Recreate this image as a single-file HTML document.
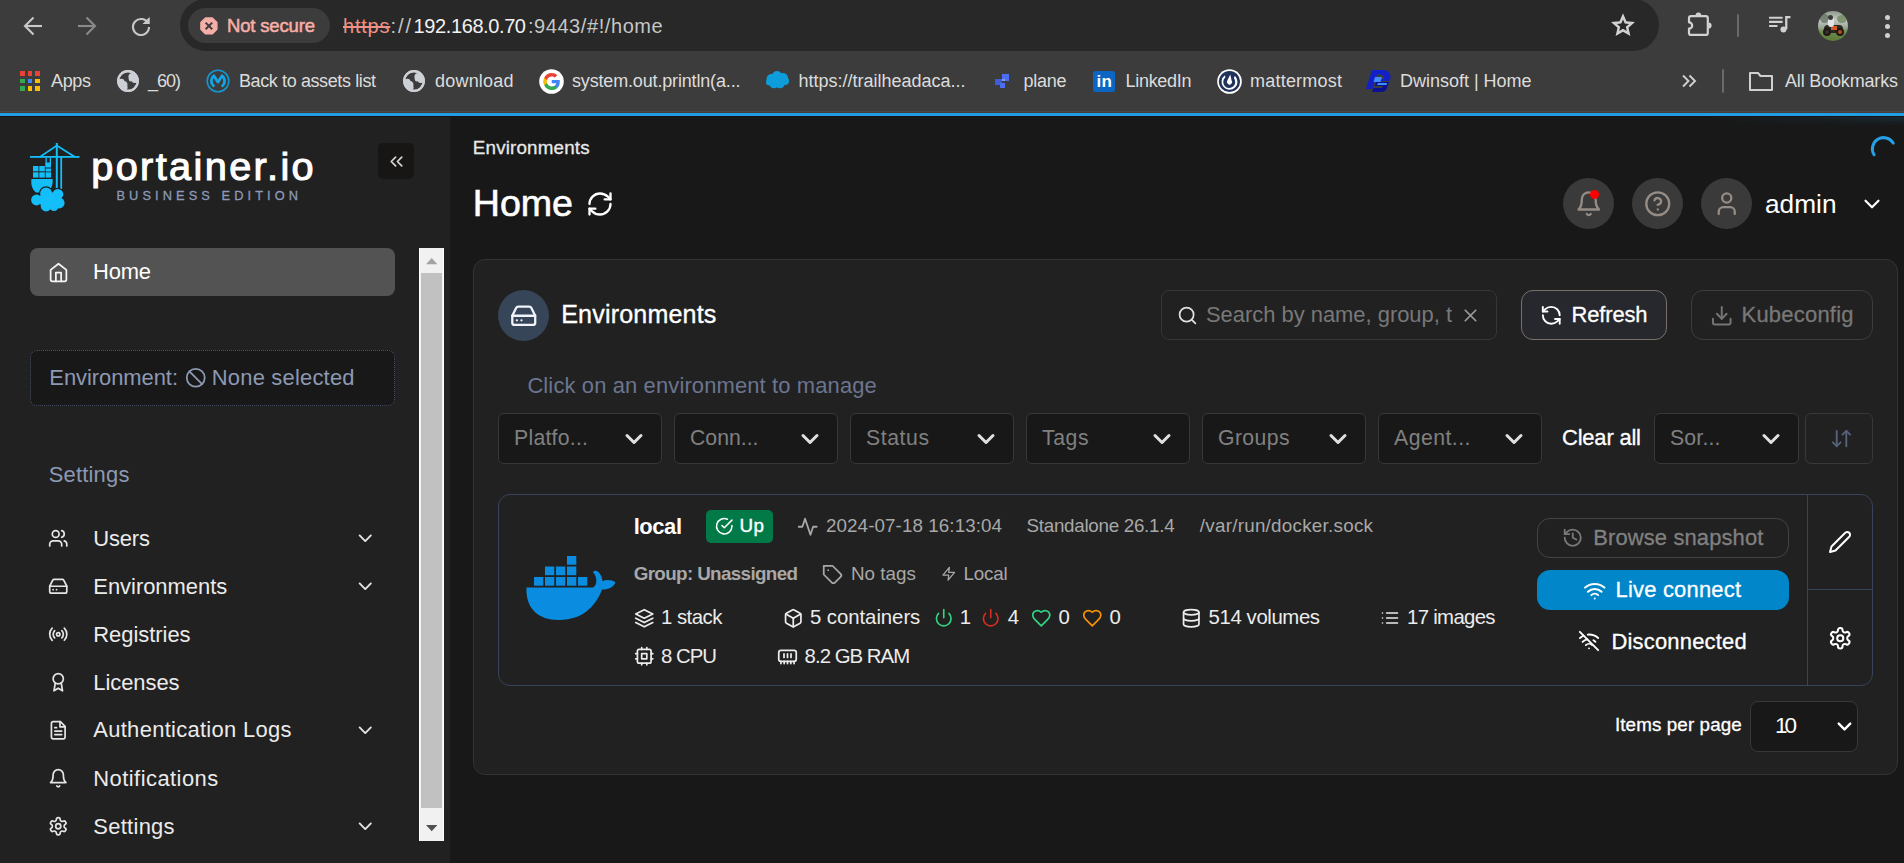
<!DOCTYPE html>
<html lang="en"><head><meta charset="utf-8"><title>Portainer | Home</title>
<style>
*{box-sizing:border-box;margin:0;padding:0}
html,body{width:1904px;height:863px;overflow:hidden;background:#181818}
body{position:relative;font-family:"Liberation Sans",sans-serif;color:#fff}
.t{position:absolute;white-space:nowrap;display:block}
.b{position:absolute}
.i{position:absolute;display:block;overflow:visible}
</style></head><body>
<div class="b" style="left:0px;top:0px;width:1904px;height:113px;background:#3c3c3c;"></div>
<div class="b" style="left:0px;top:111px;width:1904px;height:1px;background:#484848;"></div>
<div class="b" style="left:0px;top:112px;width:1904px;height:1px;background:#443d38;"></div>
<div class="b" style="left:0px;top:113px;width:1904px;height:3px;background:#229ee7;"></div>
<div class="b" style="left:0px;top:116px;width:1904px;height:1px;background:#1b1512;z-index:5;"></div>
<div class="b" style="left:180px;top:-1px;width:1479px;height:52px;background:#282828;border-radius:26px;"></div>
<div class="b" style="left:187.5px;top:8px;width:142px;height:35px;background:#3c3c3c;border-radius:17.5px;"></div>
<svg class="i" style="left:21px;top:14px" width="24" height="24" viewBox="0 0 24 24" fill="none" stroke="#c8c8c8" stroke-width="2.1" stroke-linecap="butt" stroke-linejoin="miter"><path d="M21 12H4.500"/><path d="M12.500 3.500 4 12l8.500 8.500"/></svg>
<svg class="i" style="left:75px;top:14px" width="24" height="24" viewBox="0 0 24 24" fill="none" stroke="#8a8a8a" stroke-width="2.1" stroke-linecap="butt" stroke-linejoin="miter"><path d="M3 12h16.500"/><path d="M11.500 3.500 20 12l-8.500 8.500"/></svg>
<svg class="i" style="left:129px;top:14px" width="24" height="24" viewBox="0 0 24 24" fill="none" stroke="#c8c8c8" stroke-width="2.1" stroke-linecap="butt" stroke-linejoin="miter"><path d="M19.200 9.500A8 8 0 1 0 20 13"/><path d="M20.500 3v7h-7" fill="#c8c8c8" stroke="none"/><path d="M20.500 3.500v6.500h-6.500z" fill="#c8c8c8" stroke="none"/></svg>
<svg class="i" style="left:199.700px;top:17.200px" width="17.800" height="17.800" viewBox="0 0 20 20"><path d="M6.200 1h7.600L19 6.200v7.600L13.800 19H6.200L1 13.800V6.200z" fill="#f6aea7" stroke="#f6aea7" stroke-width="1.500" stroke-linejoin="round"/><path d="M6.300 6.300l7.400 7.400M13.700 6.300l-7.400 7.400" stroke="#3c3c3c" stroke-width="2.200" fill="none"/></svg>
<span class="t" id="notsec" style="left:227px;top:16.75px;font-size:18.5px;line-height:18.5px;color:#f6aea7;letter-spacing:-0.163px;-webkit-text-stroke:0.55px #f6aea7;">Not secure</span>
<span class="t" id="url1" style="left:343px;top:16.3px;font-size:20px;line-height:20px;color:#ee9186;letter-spacing:0.785px;text-decoration:line-through;">https</span>
<span class="t" id="url2" style="left:390.4px;top:16.3px;font-size:20px;line-height:20px;color:#c4c7c5;letter-spacing:1.964px;">://</span>
<span class="t" id="url3" style="left:413.6px;top:16.3px;font-size:20px;line-height:20px;color:#f2f2f2;letter-spacing:-0.398px;">192.168.0.70</span>
<span class="t" id="url4" style="left:527.9px;top:16.3px;font-size:20px;line-height:20px;color:#c4c7c5;letter-spacing:0.577px;">:9443/#!/home</span>
<svg class="i" style="left:1605px;top:8px" width="36" height="36" viewBox="1605 8 36 36"><path d="M1623.00 13.30 L1626.41 21.21 L1634.98 22.01 L1628.51 27.69 L1630.41 36.09 L1623.00 31.70 L1615.59 36.09 L1617.49 27.69 L1611.02 22.01 L1619.59 21.21z M1623.00 19.50 L1624.73 23.52 L1629.09 23.92 L1625.80 26.81 L1626.76 31.08 L1623.00 28.84 L1619.24 31.08 L1620.20 26.81 L1616.91 23.92 L1621.27 23.52z" fill="#d2d2d2" fill-rule="evenodd"/></svg>
<svg class="i" style="left:1680px;top:5px" width="40" height="40" viewBox="1680 5 40 40"><path d="M1691 16.200H1705.800a2 2 0 0 1 2 2V32.900a2 2 0 0 1-2 2H1691a2 2 0 0 1-2-2V28.700a3.200 3.200 0 0 0 0-6.400V18.200a2 2 0 0 1 2-2z" fill="none" stroke="#d2d2d2" stroke-width="2.200" stroke-linejoin="round"/><path d="M1695.500 15.500a2.900 2.900 0 0 1 5.800 0z" fill="#d2d2d2"/><path d="M1708.500 22.400a3.100 3.100 0 0 1 0 6.200z" fill="#d2d2d2"/></svg>
<div class="b" style="left:1737px;top:14px;width:2px;height:23px;background:#6a6a6a;border-radius:1px;"></div>
<svg class="i" style="left:1767px;top:12px" width="25" height="25" viewBox="0 0 24 24" fill="none" stroke="#d0d0d0" stroke-width="2"><path d="M2 5.500h13M2 9.500h13M2 13.500h8"/><path d="M18.500 16.500V5h4" stroke-width="2.200"/><circle cx="15.800" cy="16.800" r="2.900" fill="#d0d0d0" stroke="none"/></svg>
<div class="b" style="left:1817.500px;top:11px;width:30px;height:30px;border-radius:50%;background:linear-gradient(180deg,#8e9a8c 0,#c4cbc6 30%,#9aa596 55%,#6e8a48 70%,#5c7a3a 100%);overflow:hidden"><div class="b" style="left:2px;top:3px;width:9px;height:9px;border-radius:50%;background:#5a6a55;opacity:.7"></div><div class="b" style="left:19px;top:4px;width:10px;height:8px;border-radius:50%;background:#6f8a5e;opacity:.8"></div><div class="b" style="left:6px;top:14px;width:19px;height:8px;border-radius:4px;background:#2b2724"></div><div class="b" style="left:5px;top:17px;width:8px;height:8px;border-radius:50%;background:#3a302a;border:2px solid #1c1a18"></div><div class="b" style="left:18px;top:17px;width:8px;height:8px;border-radius:50%;background:#b84a1e;border:2px solid #1c1a18"></div><div class="b" style="left:13px;top:15px;width:6px;height:4px;background:#d0581f"></div><div class="b" style="left:10px;top:6px;width:6px;height:10px;border-radius:3px;background:#e4e6e6"></div><div class="b" style="left:10.500px;top:4px;width:5px;height:5px;border-radius:50%;background:#3b3b3b"></div></div>
<div class="b" style="left:1884.5px;top:14.5px;width:5px;height:5px;background:#d0d0d0;border-radius:2.5px;"></div>
<div class="b" style="left:1884.5px;top:23.5px;width:5px;height:5px;background:#d0d0d0;border-radius:2.5px;"></div>
<div class="b" style="left:1884.5px;top:32.5px;width:5px;height:5px;background:#d0d0d0;border-radius:2.5px;"></div>
<div class="b" style="left:20px;top:71px;width:4.6px;height:4.6px;background:#ea4335;"></div>
<div class="b" style="left:27.7px;top:71px;width:4.6px;height:4.6px;background:#ea4335;"></div>
<div class="b" style="left:35.4px;top:71px;width:4.6px;height:4.6px;background:#ea4335;"></div>
<div class="b" style="left:20px;top:78.7px;width:4.6px;height:4.6px;background:#34a853;"></div>
<div class="b" style="left:27.7px;top:78.7px;width:4.6px;height:4.6px;background:#4285f4;"></div>
<div class="b" style="left:35.4px;top:78.7px;width:4.6px;height:4.6px;background:#fbbc04;"></div>
<div class="b" style="left:20px;top:86.4px;width:4.6px;height:4.6px;background:#34a853;"></div>
<div class="b" style="left:27.7px;top:86.4px;width:4.6px;height:4.6px;background:#fbbc04;"></div>
<div class="b" style="left:35.4px;top:86.4px;width:4.6px;height:4.6px;background:#fbbc04;"></div>
<span class="t" id="bk_apps" style="left:51px;top:72px;font-size:18px;line-height:18px;color:#dcdcdc;letter-spacing:-0.344px;">Apps</span>
<svg class="i" style="left:117.1px;top:70.1px" width="22" height="22" viewBox="0 0 22 22"><circle cx="11" cy="11" r="10.900" fill="#cdd0d4"/><circle cx="11" cy="11" r="8.800" fill="#3c3c3c"/><g fill="#cdd0d4"><circle cx="15.300" cy="6.800" r="3.900"/><circle cx="17.800" cy="9.800" r="3.200"/><circle cx="13.800" cy="9.600" r="2"/><circle cx="6.600" cy="14.800" r="3.900"/><circle cx="4.300" cy="12" r="3.200"/><circle cx="8.300" cy="17.800" r="2.400"/></g><circle cx="11" cy="11" r="9.800" fill="none" stroke="#cdd0d4" stroke-width="2.200"/></svg>
<span class="t" id="bk_60" style="left:148px;top:72px;font-size:18px;line-height:18px;color:#dcdcdc;letter-spacing:-1.010px;">_60)</span>
<svg class="i" style="left:205.500px;top:69px" width="24" height="24" viewBox="0 0 24 24"><circle cx="12" cy="12" r="10.800" fill="none" stroke="#1496d2" stroke-width="1.600"/><path d="M8.400 17.500A6.700 6.700 0 0 1 7.900 6.700L12 13.200l4.100-6.500a6.700 6.700 0 0 1-.500 10.800" fill="none" stroke="#12a6e8" stroke-width="2.700" stroke-linejoin="round" stroke-linecap="butt"/></svg>
<span class="t" id="bk_back" style="left:239px;top:72px;font-size:18px;line-height:18px;color:#dcdcdc;letter-spacing:-0.392px;">Back to assets list</span>
<svg class="i" style="left:403.3px;top:70.1px" width="22" height="22" viewBox="0 0 22 22"><circle cx="11" cy="11" r="10.900" fill="#cdd0d4"/><circle cx="11" cy="11" r="8.800" fill="#3c3c3c"/><g fill="#cdd0d4"><circle cx="15.300" cy="6.800" r="3.900"/><circle cx="17.800" cy="9.800" r="3.200"/><circle cx="13.800" cy="9.600" r="2"/><circle cx="6.600" cy="14.800" r="3.900"/><circle cx="4.300" cy="12" r="3.200"/><circle cx="8.300" cy="17.800" r="2.400"/></g><circle cx="11" cy="11" r="9.800" fill="none" stroke="#cdd0d4" stroke-width="2.200"/></svg>
<span class="t" id="bk_dl" style="left:435px;top:72px;font-size:18px;line-height:18px;color:#dcdcdc;letter-spacing:0.205px;">download</span>
<svg class="i" style="left:538.500px;top:68.500px" width="25" height="25" viewBox="0 0 25 25"><circle cx="12.500" cy="12.500" r="12.300" fill="#fff"/><g transform="translate(12.500 12.500) scale(1.220) translate(-12.500 -12.500)"><path d="M19.300 12.700c0-.500 0-1-.100-1.400h-6.500v2.700h3.700c-.200.900-.700 1.600-1.400 2.100v1.800h2.300c1.300-1.200 2-3 2-5.200z" fill="#4285f4"/><path d="M12.700 19.500c1.900 0 3.400-.600 4.600-1.700l-2.300-1.800c-.600.400-1.400.700-2.300.700-1.800 0-3.300-1.200-3.900-2.900H6.500v1.800c1.100 2.300 3.500 3.900 6.200 3.900z" fill="#34a853"/><path d="M8.800 13.800c-.100-.400-.200-.900-.200-1.300s.100-.900.200-1.300V9.400H6.500c-.500 1-.800 2-.800 3.100s.300 2.200.800 3.100z" fill="#fbbc05"/><path d="M12.700 8.300c1 0 1.900.400 2.600 1l2-2c-1.200-1.100-2.800-1.800-4.600-1.800-2.700 0-5.100 1.600-6.200 3.900l2.300 1.800c.600-1.700 2.100-2.900 3.900-2.900z" fill="#ea4335"/></g></svg>
<span class="t" id="bk_sys" style="left:572px;top:72px;font-size:18px;line-height:18px;color:#dcdcdc;letter-spacing:-0.163px;">system.out.println(a...</span>
<svg class="i" style="left:765px;top:70px" width="25" height="20" viewBox="0 0 25 20"><g fill="#0d9dda"><circle cx="6.500" cy="9" r="5"/><circle cx="12" cy="6" r="5"/><circle cx="18" cy="8" r="5"/><circle cx="20" cy="11" r="4"/><circle cx="15" cy="13.500" r="4.800"/><circle cx="9" cy="13.500" r="4.800"/><circle cx="4.500" cy="12" r="3.500"/></g></svg>
<span class="t" id="bk_trail" style="left:798.5px;top:72px;font-size:18px;line-height:18px;color:#dcdcdc;letter-spacing:-0.005px;">https://trailheadaca...</span>
<div class="b" style="left:1002px;top:74px;width:7px;height:7px;background:#4c6ef5;"></div>
<div class="b" style="left:995px;top:79px;width:7px;height:5.5px;background:#3f5bd8;"></div>
<div class="b" style="left:999.5px;top:82.5px;width:5px;height:5.5px;background:#4c6ef5;"></div>
<div class="b" style="left:1002px;top:79px;width:2.5px;height:2px;background:#7f97ff;"></div>
<span class="t" id="bk_plane" style="left:1023.5px;top:72px;font-size:18px;line-height:18px;color:#dcdcdc;letter-spacing:-0.262px;">plane</span>
<div class="b" style="left:1093px;top:70.5px;width:22px;height:21px;background:#0a66c2;border-radius:2.5px;"></div>
<span class="t" id="bk_in" style="left:1096.5px;top:73.3px;font-size:17px;line-height:17px;color:#fff;font-weight:700;letter-spacing:0.391px;">in</span>
<span class="t" id="bk_li" style="left:1125.5px;top:72px;font-size:18px;line-height:18px;color:#dcdcdc;letter-spacing:-0.295px;">LinkedIn</span>
<svg class="i" style="left:1216.500px;top:68.500px" width="25" height="25" viewBox="0 0 25 25"><circle cx="12.500" cy="12.500" r="12.300" fill="#fff"/><circle cx="12.500" cy="12.500" r="10.600" fill="#1e325c"/><path d="M17.800 6.800A8 8 0 1 1 8 6.200l.300 2.300a6 6 0 1 0 8.600.700z" fill="#fff"/><path d="M13.300 5.500l1.200 5.800a2.600 2.600 0 1 1-4.200.300z" fill="#fff"/></svg>
<span class="t" id="bk_mm" style="left:1250px;top:72px;font-size:18px;line-height:18px;color:#dcdcdc;letter-spacing:0.219px;">mattermost</span>
<svg class="i" style="left:1366px;top:69px" width="26" height="24" viewBox="0 0 26 24"><path d="M6 1h11c5 0 8 3.500 7.500 8l-1 3H12l1-2h5c.500-3-1-4.500-4-4.500h-3L6.500 20H0z" fill="#1220c8"/><path d="M9 8h7l-1.500 5H7.500z" fill="#3f8cff"/><path d="M10 13h13l-2 6c-1 2.500-3 4-6 4H6l1.500-4h7c1.500 0 2.300-.800 2.700-2H9z" fill="#0b1090"/><path d="M12 14h9l-.500 2H11z" fill="#3f8cff"/></svg>
<span class="t" id="bk_dw" style="left:1400px;top:72px;font-size:18px;line-height:18px;color:#dcdcdc;letter-spacing:-0.016px;">Dwinsoft | Home</span>
<svg class="i" style="left:1680px;top:72px" width="18" height="18" viewBox="0 0 18 18" fill="none" stroke="#d0d0d0" stroke-width="1.900"><path d="M3 3.500l5.500 5.500L3 14.500M9.500 3.500 15 9l-5.500 5.500"/></svg>
<div class="b" style="left:1722px;top:69px;width:2px;height:24px;background:#6a6a6a;border-radius:1px;"></div>
<svg class="i" style="left:1748px;top:70px" width="26" height="22" viewBox="0 0 26 22" fill="none" stroke="#d0d0d0" stroke-width="2" stroke-linejoin="round"><path d="M2 3h8l2.500 3H24v14H2z"/></svg>
<span class="t" id="bk_all" style="left:1785px;top:72px;font-size:18px;line-height:18px;color:#dcdcdc;letter-spacing:-0.169px;">All Bookmarks</span>
<div class="b" style="left:0px;top:116px;width:450px;height:747px;background:#212121;"></div>
<svg class="i" style="left:30px;top:143px" width="50" height="70" viewBox="0 0 50 70"><g fill="#13bef9" stroke="none"><rect x="25.800" y="0" width="2" height="46"/><rect x="30.300" y="13" width="1.800" height="33"/><rect x="0" y="13" width="49.500" height="1.800"/><path d="M26.800 1.500 9 13.500l1.200 1.300L27.300 3.200z"/><path d="M26.800 1.500 45.500 13.200l-1 1.500L26.300 3.200z"/><rect x="15.500" y="15" width="1.300" height="9"/><rect x="19.700" y="15" width="1.300" height="5"/><rect x="15.500" y="19.500" width="5.500" height="5"/><rect x="3" y="23" width="5.500" height="5.300"/><rect x="9.300" y="23" width="5.500" height="5.300"/><rect x="3" y="29.300" width="5.500" height="5.300"/><rect x="9.300" y="29.300" width="5.500" height="5.300"/><rect x="15.600" y="29.300" width="5.500" height="5.300"/><rect x="15.600" y="25.500" width="5.500" height="3"/><path d="M1.500 36h21c.800 5-1 10-5 13.500H6C2 46.500.700 41 1.500 36z"/><g stroke="#212121" stroke-width="2.400"><circle cx="16.100" cy="50.300" r="5.900"/><circle cx="27.900" cy="51.300" r="5.400"/><circle cx="6.500" cy="57" r="5.400"/><circle cx="16.100" cy="63" r="5.400"/><circle cx="29.200" cy="60" r="5.400"/><circle cx="24" cy="63.500" r="4.500"/></g><circle cx="16.100" cy="50.300" r="5.900"/><circle cx="27.900" cy="51.300" r="5.400"/><circle cx="6.500" cy="57" r="5.400"/><circle cx="16.100" cy="63" r="5.400"/><circle cx="29.200" cy="60" r="5.400"/><circle cx="24" cy="63.500" r="4.500"/><circle cx="18" cy="57" r="9"/></g></svg>
<span class="t" id="logo" style="left:91.2px;top:146.75px;font-size:39.7px;line-height:39.7px;color:#fff;letter-spacing:2.375px;-webkit-text-stroke:1.1px #fff;">portainer.io</span>
<span class="t" id="logo2" style="left:116.5px;top:190.1px;font-size:12.8px;line-height:12.8px;color:#8c9ab8;letter-spacing:4.089px;-webkit-text-stroke:0.3px #8c9ab8;">BUSINESS EDITION</span>
<div class="b" style="left:378px;top:143px;width:36px;height:36px;background:#181614;border-radius:5px;"></div>
<svg class="i" style="left:386px;top:150.5px" width="21" height="21" viewBox="0 0 24 24" fill="none" stroke="#d4d4d4" stroke-width="2" stroke-linecap="round" stroke-linejoin="round"><path d="m11 17-5-5 5-5"/><path d="m18 17-5-5 5-5"/></svg>
<div class="b" style="left:30px;top:248px;width:365px;height:48px;background:#535353;border-radius:8px;"></div>
<svg class="i" style="left:47.8px;top:262px" width="21" height="21" viewBox="0 0 24 24" fill="none" stroke="#f5f5f5" stroke-width="2" stroke-linecap="round" stroke-linejoin="round"><path d="m3 9 9-7 9 7v11a2 2 0 0 1-2 2H5a2 2 0 0 1-2-2z"/><polyline points="9 22 9 12 15 12 15 22"/></svg>
<span class="t" id="sb_home" style="left:93px;top:261.125px;font-size:21.95px;line-height:21.95px;color:#fff;letter-spacing:-0.177px;">Home</span>
<div class="b" style="left:30px;top:350px;width:365px;height:56px;background:#181818;border:1px dotted #46506a;border-radius:7px;"></div>
<span class="t" id="sb_env" style="left:49.3px;top:367.025px;font-size:21.95px;line-height:21.95px;color:#8d99b3;letter-spacing:-0.050px;">Environment:</span>
<svg class="i" style="left:184.85px;top:367.25px" width="21.5" height="21.5" viewBox="0 0 24 24" fill="none" stroke="#8d99b3" stroke-width="2" stroke-linecap="round" stroke-linejoin="round"><circle cx="12" cy="12" r="10"/><path d="m4.900 4.900 14.200 14.200"/></svg>
<span class="t" id="sb_none" style="left:211.8px;top:367.025px;font-size:21.95px;line-height:21.95px;color:#8d99b3;letter-spacing:0.204px;">None selected</span>
<div class="b" style="left:419px;top:248px;width:25px;height:593px;background:#f1f1f1;border:1px solid #fff;border-top:0;border-bottom:0;"></div>
<div class="b" style="left:421px;top:273px;width:21px;height:535px;background:#c1c1c1;"></div>
<svg class="i" style="left:425.800px;top:257.500px" width="11.400" height="6.200" viewBox="0 0 11.400 6.200"><path d="M0 6.200 5.700 0 11.400 6.200z" fill="#a3a3a3"/></svg>
<svg class="i" style="left:425.800px;top:824.800px" width="11.400" height="6.200" viewBox="0 0 11.400 6.200"><path d="M0 0 5.700 6.200 11.400 0z" fill="#505050"/></svg>
<span class="t" id="sb_set" style="left:48.7px;top:464.325px;font-size:21.95px;line-height:21.95px;color:#8d99b3;letter-spacing:0.203px;">Settings</span>
<svg class="i" style="left:48.45px;top:528.05px" width="20.5" height="20.5" viewBox="0 0 24 24" fill="none" stroke="#e5e5e5" stroke-width="2" stroke-linecap="round" stroke-linejoin="round"><path d="M16 21v-2a4 4 0 0 0-4-4H6a4 4 0 0 0-4 4v2"/><circle cx="9" cy="7" r="4"/><path d="M22 21v-2a4 4 0 0 0-3-3.87"/><path d="M16 3.13a4 4 0 0 1 0 7.75"/></svg>
<span class="t" id="sb_i0" style="left:93.3px;top:527.725px;font-size:21.95px;line-height:21.95px;color:#ebebeb;letter-spacing:-0.149px;">Users</span>
<svg class="i" style="left:353.95px;top:526.85px" width="22.5" height="22.5" viewBox="0 0 24 24" fill="none" stroke="#e5e5e5" stroke-width="2" stroke-linecap="round" stroke-linejoin="round"><path d="m6 9 6 6 6-6"/></svg>
<svg class="i" style="left:48.45px;top:576.25px" width="20.5" height="20.5" viewBox="0 0 24 24" fill="none" stroke="#e5e5e5" stroke-width="2" stroke-linecap="round" stroke-linejoin="round"><line x1="22" x2="2" y1="12" y2="12"/><path d="M5.45 5.11 2 12v6a2 2 0 0 0 2 2h16a2 2 0 0 0 2-2v-6l-3.45-6.89A2 2 0 0 0 16.76 4H7.24a2 2 0 0 0-1.79 1.11z"/><line x1="6" x2="6.01" y1="16" y2="16"/><line x1="10" x2="10.01" y1="16" y2="16"/></svg>
<span class="t" id="sb_i1" style="left:93.3px;top:575.925px;font-size:21.95px;line-height:21.95px;color:#ebebeb;letter-spacing:-0.020px;">Environments</span>
<svg class="i" style="left:353.95px;top:575.05px" width="22.5" height="22.5" viewBox="0 0 24 24" fill="none" stroke="#e5e5e5" stroke-width="2" stroke-linecap="round" stroke-linejoin="round"><path d="m6 9 6 6 6-6"/></svg>
<svg class="i" style="left:48.45px;top:624.25px" width="20.5" height="20.5" viewBox="0 0 24 24" fill="none" stroke="#e5e5e5" stroke-width="2" stroke-linecap="round" stroke-linejoin="round"><path d="M4.9 19.1C1 15.2 1 8.8 4.9 4.9"/><path d="M7.8 16.2c-2.3-2.3-2.3-6.1 0-8.5"/><circle cx="12" cy="12" r="2"/><path d="M16.2 7.8c2.3 2.3 2.3 6.1 0 8.5"/><path d="M19.1 4.9C23 8.8 23 15.1 19.1 19"/></svg>
<span class="t" id="sb_i2" style="left:93.3px;top:623.925px;font-size:21.95px;line-height:21.95px;color:#ebebeb;letter-spacing:-0.026px;">Registries</span>
<svg class="i" style="left:48.45px;top:672.05px" width="20.5" height="20.5" viewBox="0 0 24 24" fill="none" stroke="#e5e5e5" stroke-width="2" stroke-linecap="round" stroke-linejoin="round"><circle cx="12" cy="8" r="6"/><path d="M15.477 12.89 17 22l-5-3-5 3 1.523-9.11"/></svg>
<span class="t" id="sb_i3" style="left:93.3px;top:671.725px;font-size:21.95px;line-height:21.95px;color:#ebebeb;letter-spacing:-0.042px;">Licenses</span>
<svg class="i" style="left:48.45px;top:719.75px" width="20.5" height="20.5" viewBox="0 0 24 24" fill="none" stroke="#e5e5e5" stroke-width="2" stroke-linecap="round" stroke-linejoin="round"><path d="M14.5 2H6a2 2 0 0 0-2 2v16a2 2 0 0 0 2 2h12a2 2 0 0 0 2-2V7.5L14.5 2z"/><polyline points="14 2 14 8 20 8"/><line x1="16" x2="8" y1="13" y2="13"/><line x1="16" x2="8" y1="17" y2="17"/><line x1="10" x2="8" y1="9" y2="9"/></svg>
<span class="t" id="sb_i4" style="left:93.3px;top:719.425px;font-size:21.95px;line-height:21.95px;color:#ebebeb;letter-spacing:0.300px;">Authentication Logs</span>
<svg class="i" style="left:353.95px;top:718.55px" width="22.5" height="22.5" viewBox="0 0 24 24" fill="none" stroke="#e5e5e5" stroke-width="2" stroke-linecap="round" stroke-linejoin="round"><path d="m6 9 6 6 6-6"/></svg>
<svg class="i" style="left:48.45px;top:767.85px" width="20.5" height="20.5" viewBox="0 0 24 24" fill="none" stroke="#e5e5e5" stroke-width="2" stroke-linecap="round" stroke-linejoin="round"><path d="M6 8a6 6 0 0 1 12 0c0 7 3 9 3 9H3s3-2 3-9"/><path d="M10.3 21a1.94 1.94 0 0 0 3.4 0"/></svg>
<span class="t" id="sb_i5" style="left:93.3px;top:767.525px;font-size:21.95px;line-height:21.95px;color:#ebebeb;letter-spacing:0.450px;">Notifications</span>
<svg class="i" style="left:48.45px;top:815.95px" width="20.5" height="20.5" viewBox="0 0 24 24" fill="none" stroke="#e5e5e5" stroke-width="2" stroke-linecap="round" stroke-linejoin="round"><path d="M12.22 2h-.44a2 2 0 0 0-2 2v.18a2 2 0 0 1-1 1.73l-.43.25a2 2 0 0 1-2 0l-.15-.08a2 2 0 0 0-2.73.73l-.22.38a2 2 0 0 0 .73 2.73l.15.1a2 2 0 0 1 1 1.72v.51a2 2 0 0 1-1 1.74l-.15.09a2 2 0 0 0-.73 2.73l.22.38a2 2 0 0 0 2.73.73l.15-.08a2 2 0 0 1 2 0l.43.25a2 2 0 0 1 1 1.73V20a2 2 0 0 0 2 2h.44a2 2 0 0 0 2-2v-.18a2 2 0 0 1 1-1.73l.43-.25a2 2 0 0 1 2 0l.15.08a2 2 0 0 0 2.73-.73l.22-.39a2 2 0 0 0-.73-2.73l-.15-.08a2 2 0 0 1-1-1.74v-.5a2 2 0 0 1 1-1.74l.15-.09a2 2 0 0 0 .73-2.73l-.22-.38a2 2 0 0 0-2.73-.73l-.15.08a2 2 0 0 1-2 0l-.43-.25a2 2 0 0 1-1-1.73V4a2 2 0 0 0-2-2z"/><circle cx="12" cy="12" r="3"/></svg>
<span class="t" id="sb_i6" style="left:93.3px;top:815.625px;font-size:21.95px;line-height:21.95px;color:#ebebeb;letter-spacing:0.288px;">Settings</span>
<svg class="i" style="left:353.95px;top:814.75px" width="22.5" height="22.5" viewBox="0 0 24 24" fill="none" stroke="#e5e5e5" stroke-width="2" stroke-linecap="round" stroke-linejoin="round"><path d="m6 9 6 6 6-6"/></svg>
<span class="t" id="crumb" style="left:472.8px;top:139.195px;font-size:18.81px;line-height:18.81px;color:#e8e8e8;letter-spacing:0.171px;-webkit-text-stroke:0.3px #e8e8e8;">Environments</span>
<span class="t" id="h1" style="left:472.8px;top:185.19px;font-size:37.62px;line-height:37.62px;color:#fff;letter-spacing:-0.043px;-webkit-text-stroke:0.6px #fff;">Home</span>
<svg class="i" style="left:585.6px;top:189.6px" width="28" height="28" viewBox="0 0 24 24" fill="none" stroke="#fff" stroke-width="2" stroke-linecap="round" stroke-linejoin="round"><path d="M3 12a9 9 0 0 1 9-9 9.75 9.75 0 0 1 6.74 2.74L21 8"/><path d="M21 3v5h-5"/><path d="M21 12a9 9 0 0 1-9 9 9.75 9.75 0 0 1-6.74-2.74L3 16"/><path d="M8 16H3v5"/></svg>
<svg class="i" style="left:1864px;top:130px" width="40" height="40" viewBox="1864 130 40 40" fill="none" stroke="#27a0e8" stroke-width="3" stroke-linecap="round"><path d="M1874.100 154.800A11.200 11.200 0 1 1 1893.200 143.100"/></svg>
<div class="b" style="left:1700px;top:116px;width:204px;height:10px;background:linear-gradient(to right,rgba(30,150,220,0),rgba(30,150,220,.16));-webkit-mask-image:linear-gradient(to bottom,#000,transparent);mask-image:linear-gradient(to bottom,#000,transparent);"></div>
<div class="b" style="left:1563px;top:178px;width:51px;height:51px;background:#3a3a3a;border-radius:25.5px;"></div>
<svg class="i" style="left:1574.75px;top:189.85px" width="27.5" height="27.5" viewBox="0 0 24 24" fill="none" stroke="#968c86" stroke-width="2" stroke-linecap="round" stroke-linejoin="round"><path d="M6 8a6 6 0 0 1 12 0c0 7 3 9 3 9H3s3-2 3-9"/><path d="M10.3 21a1.94 1.94 0 0 0 3.4 0"/></svg>
<div class="b" style="left:1632px;top:178px;width:51px;height:51px;background:#3a3a3a;border-radius:25.5px;"></div>
<svg class="i" style="left:1643.75px;top:189.85px" width="27.5" height="27.5" viewBox="0 0 24 24" fill="none" stroke="#968c86" stroke-width="2" stroke-linecap="round" stroke-linejoin="round"><circle cx="12" cy="12" r="10"/><path d="M9.09 9a3 3 0 0 1 5.83 1c0 2-3 3-3 3"/><path d="M12 17h.01"/></svg>
<div class="b" style="left:1701px;top:178px;width:51px;height:51px;background:#3a3a3a;border-radius:25.5px;"></div>
<svg class="i" style="left:1712.75px;top:189.85px" width="27.5" height="27.5" viewBox="0 0 24 24" fill="none" stroke="#968c86" stroke-width="2" stroke-linecap="round" stroke-linejoin="round"><path d="M19 21v-2a4 4 0 0 0-4-4H9a4 4 0 0 0-4 4v2"/><circle cx="12" cy="7" r="4"/></svg>
<div class="b" style="left:1590px;top:190px;width:9.3px;height:9.3px;background:#ff0000;border-radius:5px;"></div>
<span class="t" id="admin" style="left:1765px;top:191.175px;font-size:26.25px;line-height:26.25px;color:#fff;">admin</span>
<svg class="i" style="left:1859px;top:191px" width="26" height="26" viewBox="0 0 24 24" fill="none" stroke="#fff" stroke-width="2" stroke-linecap="round" stroke-linejoin="round"><path d="m6 9 6 6 6-6"/></svg>
<div class="b" style="left:473px;top:259px;width:1425px;height:516px;background:#212121;border:1px solid #333;border-radius:12px;"></div>
<div class="b" style="left:498px;top:290px;width:51px;height:51px;background:#374558;border-radius:26px;"></div>
<svg class="i" style="left:509.95px;top:301.65px" width="27.5" height="27.5" viewBox="0 0 24 24" fill="none" stroke="#f0f4fa" stroke-width="2" stroke-linecap="round" stroke-linejoin="round"><line x1="22" x2="2" y1="12" y2="12"/><path d="M5.45 5.11 2 12v6a2 2 0 0 0 2 2h16a2 2 0 0 0 2-2v-6l-3.45-6.89A2 2 0 0 0 16.76 4H7.24a2 2 0 0 0-1.79 1.11z"/><line x1="6" x2="6.01" y1="16" y2="16"/><line x1="10" x2="10.01" y1="16" y2="16"/></svg>
<span class="t" id="cardt" style="left:561.2px;top:302.46px;font-size:25.08px;line-height:25.08px;color:#fff;letter-spacing:0.170px;-webkit-text-stroke:0.35px #fff;">Environments</span>
<div class="b" style="left:1161px;top:290px;width:336px;height:50px;background:#212121;border:1px solid #383533;border-radius:8px;"></div>
<svg class="i" style="left:1177px;top:304.8px" width="21" height="21" viewBox="0 0 24 24" fill="none" stroke="#e0e0e0" stroke-width="2" stroke-linecap="round" stroke-linejoin="round"><circle cx="11" cy="11" r="8"/><path d="m21 21-4.3-4.3"/></svg>
<span class="t" id="search" style="left:1206px;top:303.825px;font-size:21.95px;line-height:21.95px;color:#787878;letter-spacing:-0.014px;">Search by name, group, t</span>
<svg class="i" style="left:1460px;top:304.8px" width="21" height="21" viewBox="0 0 24 24" fill="none" stroke="#9a9a9a" stroke-width="2" stroke-linecap="round" stroke-linejoin="round"><path d="M18 6 6 18"/><path d="m6 6 12 12"/></svg>
<div class="b" style="left:1521px;top:290px;width:146px;height:50px;background:#27282d;border:1px solid #7a716c;border-radius:12px;"></div>
<svg class="i" style="left:1540.25px;top:304.05px" width="22.5" height="22.5" viewBox="0 0 24 24" fill="none" stroke="#fff" stroke-width="2" stroke-linecap="round" stroke-linejoin="round"><path d="M21 12a9 9 0 0 0-9-9 9.750 9.750 0 0 0-6.740 2.740L3 8"/><path d="M3 3v5h5"/><path d="M3 12a9 9 0 0 0 9 9 9.750 9.750 0 0 0 6.740-2.740L21 16"/><path d="M16 16h5v5"/></svg>
<span class="t" id="refbtn" style="left:1571.5px;top:303.825px;font-size:21.95px;line-height:21.95px;color:#fff;letter-spacing:-0.138px;-webkit-text-stroke:0.3px #fff;">Refresh</span>
<div class="b" style="left:1691px;top:290px;width:182px;height:50px;background:#212121;border:1px solid #403c3a;border-radius:12px;"></div>
<svg class="i" style="left:1709.75px;top:303.55px" width="23.5" height="23.5" viewBox="0 0 24 24" fill="none" stroke="#757575" stroke-width="2" stroke-linecap="round" stroke-linejoin="round"><path d="M21 15v4a2 2 0 0 1-2 2H5a2 2 0 0 1-2-2v-4"/><polyline points="7 10 12 15 17 10"/><line x1="12" x2="12" y1="15" y2="3"/></svg>
<span class="t" id="kube" style="left:1741.5px;top:303.825px;font-size:21.95px;line-height:21.95px;color:#787878;letter-spacing:0.247px;-webkit-text-stroke:0.3px #787878;">Kubeconfig</span>
<span class="t" id="click" style="left:527.4px;top:374.525px;font-size:21.95px;line-height:21.95px;color:#6b7590;letter-spacing:0.134px;">Click on an environment to manage</span>
<div class="b" style="left:498px;top:413px;width:164px;height:51px;background:#181818;border:1px solid #383838;border-radius:6px;"></div>
<span class="t" id="f0" style="left:514px;top:426.795px;font-size:21.21px;line-height:21.21px;color:#808080;letter-spacing:0.262px;">Platfo...</span>
<svg class="i" style="left:620px;top:424.5px" width="28" height="28" viewBox="0 0 24 24" fill="none" stroke="#e0e0e0" stroke-width="2.6" stroke-linecap="round" stroke-linejoin="round"><path d="m6 9 6 6 6-6"/></svg>
<div class="b" style="left:674px;top:413px;width:164px;height:51px;background:#181818;border:1px solid #383838;border-radius:6px;"></div>
<span class="t" id="f1" style="left:690px;top:426.795px;font-size:21.21px;line-height:21.21px;color:#808080;letter-spacing:0.021px;">Conn...</span>
<svg class="i" style="left:796px;top:424.5px" width="28" height="28" viewBox="0 0 24 24" fill="none" stroke="#e0e0e0" stroke-width="2.6" stroke-linecap="round" stroke-linejoin="round"><path d="m6 9 6 6 6-6"/></svg>
<div class="b" style="left:850px;top:413px;width:164px;height:51px;background:#181818;border:1px solid #383838;border-radius:6px;"></div>
<span class="t" id="f2" style="left:866px;top:426.795px;font-size:21.21px;line-height:21.21px;color:#808080;letter-spacing:0.575px;">Status</span>
<svg class="i" style="left:972px;top:424.5px" width="28" height="28" viewBox="0 0 24 24" fill="none" stroke="#e0e0e0" stroke-width="2.6" stroke-linecap="round" stroke-linejoin="round"><path d="m6 9 6 6 6-6"/></svg>
<div class="b" style="left:1026px;top:413px;width:164px;height:51px;background:#181818;border:1px solid #383838;border-radius:6px;"></div>
<span class="t" id="f3" style="left:1042px;top:426.795px;font-size:21.21px;line-height:21.21px;color:#808080;letter-spacing:0.568px;">Tags</span>
<svg class="i" style="left:1148px;top:424.5px" width="28" height="28" viewBox="0 0 24 24" fill="none" stroke="#e0e0e0" stroke-width="2.6" stroke-linecap="round" stroke-linejoin="round"><path d="m6 9 6 6 6-6"/></svg>
<div class="b" style="left:1202px;top:413px;width:164px;height:51px;background:#181818;border:1px solid #383838;border-radius:6px;"></div>
<span class="t" id="f4" style="left:1218px;top:426.795px;font-size:21.21px;line-height:21.21px;color:#808080;letter-spacing:0.391px;">Groups</span>
<svg class="i" style="left:1324px;top:424.5px" width="28" height="28" viewBox="0 0 24 24" fill="none" stroke="#e0e0e0" stroke-width="2.6" stroke-linecap="round" stroke-linejoin="round"><path d="m6 9 6 6 6-6"/></svg>
<div class="b" style="left:1378px;top:413px;width:164px;height:51px;background:#181818;border:1px solid #383838;border-radius:6px;"></div>
<span class="t" id="f5" style="left:1394px;top:426.795px;font-size:21.21px;line-height:21.21px;color:#808080;letter-spacing:0.487px;">Agent...</span>
<svg class="i" style="left:1500px;top:424.5px" width="28" height="28" viewBox="0 0 24 24" fill="none" stroke="#e0e0e0" stroke-width="2.6" stroke-linecap="round" stroke-linejoin="round"><path d="m6 9 6 6 6-6"/></svg>
<span class="t" id="clear" style="left:1562px;top:427.025px;font-size:21.95px;line-height:21.95px;color:#fff;letter-spacing:-0.184px;-webkit-text-stroke:0.3px #fff;">Clear all</span>
<div class="b" style="left:1654px;top:413px;width:145px;height:51px;background:#181818;border:1px solid #383838;border-radius:6px;"></div>
<span class="t" id="sort" style="left:1670px;top:426.795px;font-size:21.21px;line-height:21.21px;color:#808080;letter-spacing:0.200px;">Sor...</span>
<svg class="i" style="left:1757px;top:424.5px" width="28" height="28" viewBox="0 0 24 24" fill="none" stroke="#e0e0e0" stroke-width="2.6" stroke-linecap="round" stroke-linejoin="round"><path d="m6 9 6 6 6-6"/></svg>
<div class="b" style="left:1805px;top:413px;width:68px;height:51px;background:#212121;border:1px solid #383838;border-radius:6px;"></div>
<svg class="i" style="left:1830.2px;top:426.8px" width="23" height="23" viewBox="0 0 24 24" fill="none" stroke="#56617b" stroke-width="2" stroke-linecap="round" stroke-linejoin="round"><path d="m3 16 4 4 4-4"/><path d="M7 20V4"/><path d="m21 8-4-4-4 4"/><path d="M17 4v16"/></svg>
<div class="b" style="left:498px;top:494px;width:1375px;height:192px;background:#212121;border:1px solid #37445c;border-radius:12px;"></div>
<div class="b" style="left:1807px;top:494px;width:1px;height:192px;background:#37445c;"></div>
<div class="b" style="left:1807px;top:589px;width:66px;height:1px;background:#37445c;"></div>
<svg class="i" style="left:526px;top:555px" width="90" height="66" viewBox="0 0 90 66"><g fill="#0a8ce0"><rect x="8" y="22" width="9.300" height="8.700"/><rect x="19" y="22" width="9.300" height="8.700"/><rect x="30" y="22" width="9.300" height="8.700"/><rect x="41" y="22" width="9.300" height="8.700"/><rect x="52" y="22" width="9.300" height="8.700"/><rect x="19" y="11.5" width="9.300" height="8.700"/><rect x="30" y="11.5" width="9.300" height="8.700"/><rect x="41" y="11.5" width="9.300" height="8.700"/><rect x="41" y="1" width="9.300" height="8.700"/><path d="M.500 32.500h66.500c2.500-1.500 3.500-4 3.300-7.500-.300-3.500-1.500-6-3.300-7.800 1.800-2.800 5.500-1.200 7.500 2.500 1.500 2.500 2 5 1.800 6.500 4.500-1.800 9.500-1.500 13.200 1.300-2 4.500-7 7.200-13.500 7-5 13.500-16.500 30.500-43.500 30.500C12 65 1.500 53.500.500 37.500c-.100-1.800-.100-3.500 0-5z"/></g></svg>
<span class="t" id="local" style="left:633.7px;top:515.525px;font-size:21.95px;line-height:21.95px;color:#fff;font-weight:700;letter-spacing:-0.425px;">local</span>
<div class="b" style="left:706px;top:510px;width:67px;height:32.7px;background:#027a48;border-radius:5px;"></div>
<svg class="i" style="left:714.75px;top:517.05px" width="18.5" height="18.5" viewBox="0 0 24 24" fill="none" stroke="#fff" stroke-width="2" stroke-linecap="round" stroke-linejoin="round"><path d="M22 11.08V12a10 10 0 1 1-5.93-9.14"/><polyline points="22 4 12 14.01 9 11.01"/></svg>
<span class="t" id="up" style="left:739.5px;top:516.795px;font-size:18.81px;line-height:18.81px;color:#fff;letter-spacing:0.469px;-webkit-text-stroke:0.4px #fff;">Up</span>
<svg class="i" style="left:796.75px;top:515.55px" width="21.5" height="21.5" viewBox="0 0 24 24" fill="none" stroke="#a8a8a8" stroke-width="2" stroke-linecap="round" stroke-linejoin="round"><path d="M22 12h-4l-3 9L9 3l-3 9H2"/></svg>
<span class="t" id="date" style="left:826px;top:516.895px;font-size:18.81px;line-height:18.81px;color:#a8a8a8;letter-spacing:0.081px;">2024-07-18 16:13:04</span>
<span class="t" id="stand" style="left:1026.6px;top:516.895px;font-size:18.81px;line-height:18.81px;color:#a8a8a8;letter-spacing:-0.288px;">Standalone 26.1.4</span>
<span class="t" id="sock" style="left:1199.8px;top:516.895px;font-size:18.81px;line-height:18.81px;color:#a8a8a8;letter-spacing:0.263px;">/var/run/docker.sock</span>
<span class="t" id="group" style="left:633.7px;top:564.695px;font-size:18.81px;line-height:18.81px;color:#a8a8a8;font-weight:700;letter-spacing:-0.632px;">Group: Unassigned</span>
<svg class="i" style="left:822px;top:563.5px" width="21" height="21" viewBox="0 0 24 24" fill="none" stroke="#a8a8a8" stroke-width="2" stroke-linecap="round" stroke-linejoin="round"><path d="M12 2H2v10l9.29 9.29c.94.94 2.48.94 3.42 0l6.58-6.58c.94-.94.94-2.48 0-3.42L12 2Z"/><path d="M7 7h.01"/></svg>
<span class="t" id="notags" style="left:851px;top:564.695px;font-size:18.81px;line-height:18.81px;color:#a8a8a8;letter-spacing:0.036px;">No tags</span>
<svg class="i" style="left:940.55px;top:566.05px" width="15.5" height="15.5" viewBox="0 0 24 24" fill="none" stroke="#a8a8a8" stroke-width="2" stroke-linecap="round" stroke-linejoin="round"><polygon points="13 2 3 14 12 14 11 22 21 10 12 10 13 2"/></svg>
<span class="t" id="locl" style="left:963.6px;top:564.695px;font-size:18.81px;line-height:18.81px;color:#a8a8a8;letter-spacing:-0.209px;">Local</span>
<svg class="i" style="left:634.45px;top:607.55px" width="20.5" height="20.5" viewBox="0 0 24 24" fill="none" stroke="#ececec" stroke-width="2" stroke-linecap="round" stroke-linejoin="round"><polygon points="12 2 2 7 12 12 22 7 12 2"/><polyline points="2 17 12 22 22 17"/><polyline points="2 12 12 17 22 12"/></svg>
<span class="t" id="stack" style="left:661px;top:607.11px;font-size:20.38px;line-height:20.38px;color:#ececec;letter-spacing:-0.517px;">1 stack</span>
<svg class="i" style="left:783.25px;top:607.55px" width="20.5" height="20.5" viewBox="0 0 24 24" fill="none" stroke="#ececec" stroke-width="2" stroke-linecap="round" stroke-linejoin="round"><path d="M21 8a2 2 0 0 0-1-1.730l-7-4a2 2 0 0 0-2 0l-7 4A2 2 0 0 0 3 8v8a2 2 0 0 0 1 1.730l7 4a2 2 0 0 0 2 0l7-4A2 2 0 0 0 21 16Z"/><path d="m3.300 7 8.700 5 8.700-5"/><path d="M12 22V12"/></svg>
<span class="t" id="cont" style="left:810px;top:607.11px;font-size:20.38px;line-height:20.38px;color:#ececec;letter-spacing:-0.057px;">5 containers</span>
<svg class="i" style="left:933.75px;top:607.75px" width="19.5" height="19.5" viewBox="0 0 24 24" fill="none" stroke="#32d583" stroke-width="2" stroke-linecap="round" stroke-linejoin="round"><path d="M18.360 6.640a9 9 0 1 1-12.730 0"/><line x1="12" x2="12" y1="2" y2="12"/></svg>
<span class="t" id="n1" style="left:959.8px;top:607.11px;font-size:20.38px;line-height:20.38px;color:#ececec;">1</span>
<svg class="i" style="left:980.85px;top:607.75px" width="19.5" height="19.5" viewBox="0 0 24 24" fill="none" stroke="#d92d20" stroke-width="2" stroke-linecap="round" stroke-linejoin="round"><path d="M18.360 6.640a9 9 0 1 1-12.730 0"/><line x1="12" x2="12" y1="2" y2="12"/></svg>
<span class="t" id="n4" style="left:1007.7px;top:607.11px;font-size:20.38px;line-height:20.38px;color:#ececec;">4</span>
<svg class="i" style="left:1031.05px;top:607.75px" width="20.5" height="20.5" viewBox="0 0 24 24" fill="none" stroke="#32d583" stroke-width="2" stroke-linecap="round" stroke-linejoin="round"><path d="M19 14c1.490-1.460 3-3.210 3-5.500A5.500 5.500 0 0 0 16.500 3c-1.760 0-3 .500-4.500 2-1.500-1.500-2.740-2-4.500-2A5.500 5.500 0 0 0 2 8.500c0 2.300 1.500 4.050 3 5.500l7 7Z"/></svg>
<span class="t" id="n0a" style="left:1058.6px;top:607.11px;font-size:20.38px;line-height:20.38px;color:#ececec;">0</span>
<svg class="i" style="left:1082.05px;top:607.75px" width="20.5" height="20.5" viewBox="0 0 24 24" fill="none" stroke="#f79009" stroke-width="2" stroke-linecap="round" stroke-linejoin="round"><path d="M19 14c1.490-1.460 3-3.210 3-5.500A5.500 5.500 0 0 0 16.500 3c-1.760 0-3 .500-4.500 2-1.500-1.500-2.740-2-4.500-2A5.500 5.500 0 0 0 2 8.500c0 2.300 1.500 4.050 3 5.500l7 7Z"/></svg>
<span class="t" id="n0b" style="left:1109.6px;top:607.11px;font-size:20.38px;line-height:20.38px;color:#ececec;">0</span>
<svg class="i" style="left:1180.95px;top:607.55px" width="20.5" height="20.5" viewBox="0 0 24 24" fill="none" stroke="#ececec" stroke-width="2" stroke-linecap="round" stroke-linejoin="round"><ellipse cx="12" cy="5" rx="9" ry="3"/><path d="M3 5v14c0 1.660 4 3 9 3s9-1.340 9-3V5"/><path d="M3 12c0 1.660 4 3 9 3s9-1.340 9-3"/></svg>
<span class="t" id="vols" style="left:1208.6px;top:607.11px;font-size:20.38px;line-height:20.38px;color:#ececec;letter-spacing:-0.404px;">514 volumes</span>
<svg class="i" style="left:1380.3px;top:607.8px" width="20" height="20" viewBox="0 0 24 24" fill="none" stroke="#ececec" stroke-width="2" stroke-linecap="round" stroke-linejoin="round"><line x1="8" x2="21" y1="6" y2="6"/><line x1="8" x2="21" y1="12" y2="12"/><line x1="8" x2="21" y1="18" y2="18"/><line x1="3" x2="3.010" y1="6" y2="6"/><line x1="3" x2="3.010" y1="12" y2="12"/><line x1="3" x2="3.010" y1="18" y2="18"/></svg>
<span class="t" id="imgs" style="left:1407px;top:607.11px;font-size:20.38px;line-height:20.38px;color:#ececec;letter-spacing:-0.680px;">17 images</span>
<svg class="i" style="left:634.45px;top:646.25px" width="20.5" height="20.5" viewBox="0 0 24 24" fill="none" stroke="#ececec" stroke-width="2" stroke-linecap="round" stroke-linejoin="round"><rect x="4" y="4" width="16" height="16" rx="2"/><rect x="9" y="9" width="6" height="6"/><path d="M15 2v2"/><path d="M15 20v2"/><path d="M2 15h2"/><path d="M2 9h2"/><path d="M20 15h2"/><path d="M20 9h2"/><path d="M9 2v2"/><path d="M9 20v2"/></svg>
<span class="t" id="cpu" style="left:661px;top:646.11px;font-size:20.38px;line-height:20.38px;color:#ececec;letter-spacing:-0.992px;">8 CPU</span>
<svg class="i" style="left:777px;top:646px" width="21" height="21" viewBox="0 0 24 24" fill="none" stroke="#ececec" stroke-width="2" stroke-linecap="round" stroke-linejoin="round"><rect x="2" y="5" width="20" height="12.500" rx="2.500"/><path d="M8 9v4"/><path d="M12 9v4"/><path d="M16 9v4"/><path d="M4.500 17.500v2.500"/><path d="M8.200 17.500v2.500"/><path d="M12 17.500v2.500"/><path d="M15.800 17.500v2.500"/><path d="M19.500 17.500v2.500"/></svg>
<span class="t" id="ram" style="left:804.6px;top:646.11px;font-size:20.38px;line-height:20.38px;color:#ececec;letter-spacing:-0.965px;">8.2 GB RAM</span>
<div class="b" style="left:1537px;top:518px;width:252px;height:40px;background:#212121;border:1px solid #48433f;border-radius:13px;"></div>
<svg class="i" style="left:1562.15px;top:527.25px" width="21.5" height="21.5" viewBox="0 0 24 24" fill="none" stroke="#7a7a7a" stroke-width="2" stroke-linecap="round" stroke-linejoin="round"><path d="M3 12a9 9 0 1 0 9-9 9.750 9.750 0 0 0-6.740 2.740L3 8"/><path d="M3 3v5h5"/><path d="M12 7v5l4 2"/></svg>
<span class="t" id="browse" style="left:1593.3px;top:526.525px;font-size:21.95px;line-height:21.95px;color:#808080;letter-spacing:0.123px;-webkit-text-stroke:0.3px #808080;">Browse snapshot</span>
<div class="b" style="left:1537px;top:570px;width:252px;height:40px;background:#0086c9;border-radius:13px;"></div>
<svg class="i" style="left:1583.25px;top:578.75px" width="23.5" height="23.5" viewBox="0 0 24 24" fill="none" stroke="#fff" stroke-width="2" stroke-linecap="round" stroke-linejoin="round"><path d="M5 13a10 10 0 0 1 14 0"/><path d="M8.500 16.500a5 5 0 0 1 7 0"/><path d="M2 8.820a15 15 0 0 1 20 0"/><line x1="12" x2="12.010" y1="20" y2="20"/></svg>
<span class="t" id="live" style="left:1615.6px;top:579.425px;font-size:21.95px;line-height:21.95px;color:#fff;letter-spacing:0.201px;-webkit-text-stroke:0.3px #fff;">Live connect</span>
<svg class="i" style="left:1577.8px;top:630.3px" width="22" height="22" viewBox="0 0 24 24" fill="none" stroke="#fff" stroke-width="2" stroke-linecap="round" stroke-linejoin="round"><line x1="2" x2="22" y1="2" y2="22"/><path d="M8.500 16.500a5 5 0 0 1 7 0"/><path d="M2 8.820a15 15 0 0 1 4.170-2.650"/><path d="M10.660 5c4.010-.360 8.140.900 11.340 3.760"/><path d="M16.850 11.250a10 10 0 0 1 2.220 1.680"/><path d="M5 13a10 10 0 0 1 5.240-2.760"/><line x1="12" x2="12.010" y1="20" y2="20"/></svg>
<span class="t" id="disc" style="left:1611.4px;top:631.025px;font-size:21.95px;line-height:21.95px;color:#fff;letter-spacing:0.216px;-webkit-text-stroke:0.3px #fff;">Disconnected</span>
<svg class="i" style="left:1828px;top:530px" width="24" height="24" viewBox="0 0 24 24" fill="none" stroke="#fff" stroke-width="2" stroke-linecap="round" stroke-linejoin="round"><path d="M17 3a2.850 2.830 0 1 1 4 4L7.500 20.500 2 22l1.500-5.500Z"/></svg>
<svg class="i" style="left:1827.75px;top:625.55px" width="24.5" height="24.5" viewBox="0 0 24 24" fill="none" stroke="#fff" stroke-width="2" stroke-linecap="round" stroke-linejoin="round"><path d="M12.22 2h-.44a2 2 0 0 0-2 2v.18a2 2 0 0 1-1 1.73l-.43.25a2 2 0 0 1-2 0l-.15-.08a2 2 0 0 0-2.73.73l-.22.38a2 2 0 0 0 .73 2.73l.15.1a2 2 0 0 1 1 1.72v.51a2 2 0 0 1-1 1.74l-.15.09a2 2 0 0 0-.73 2.73l.22.38a2 2 0 0 0 2.73.73l.15-.08a2 2 0 0 1 2 0l.43.25a2 2 0 0 1 1 1.73V20a2 2 0 0 0 2 2h.44a2 2 0 0 0 2-2v-.18a2 2 0 0 1 1-1.73l.43-.25a2 2 0 0 1 2 0l.15.08a2 2 0 0 0 2.73-.73l.22-.39a2 2 0 0 0-.73-2.73l-.15-.08a2 2 0 0 1-1-1.74v-.5a2 2 0 0 1 1-1.74l.15-.09a2 2 0 0 0 .73-2.73l-.22-.38a2 2 0 0 0-2.73-.73l-.15.08a2 2 0 0 1-2 0l-.43-.25a2 2 0 0 1-1-1.73V4a2 2 0 0 0-2-2z"/><circle cx="12" cy="12" r="3"/></svg>
<span class="t" id="ipp" style="left:1614.9px;top:716.195px;font-size:18.81px;line-height:18.81px;color:#fff;letter-spacing:0.116px;-webkit-text-stroke:0.3px #fff;">Items per page</span>
<div class="b" style="left:1750px;top:701px;width:108px;height:51px;background:#181818;border:1px solid #383838;border-radius:8px;"></div>
<span class="t" id="ten" style="left:1775.1px;top:714.95px;font-size:22.5px;line-height:22.5px;color:#fff;letter-spacing:-3.031px;">10</span>
<svg class="i" style="left:1832.5px;top:715.2px" width="23" height="23" viewBox="0 0 24 24" fill="none" stroke="#fff" stroke-width="2.5" stroke-linecap="round" stroke-linejoin="round"><path d="m6 9 6 6 6-6"/></svg>
</body></html>
